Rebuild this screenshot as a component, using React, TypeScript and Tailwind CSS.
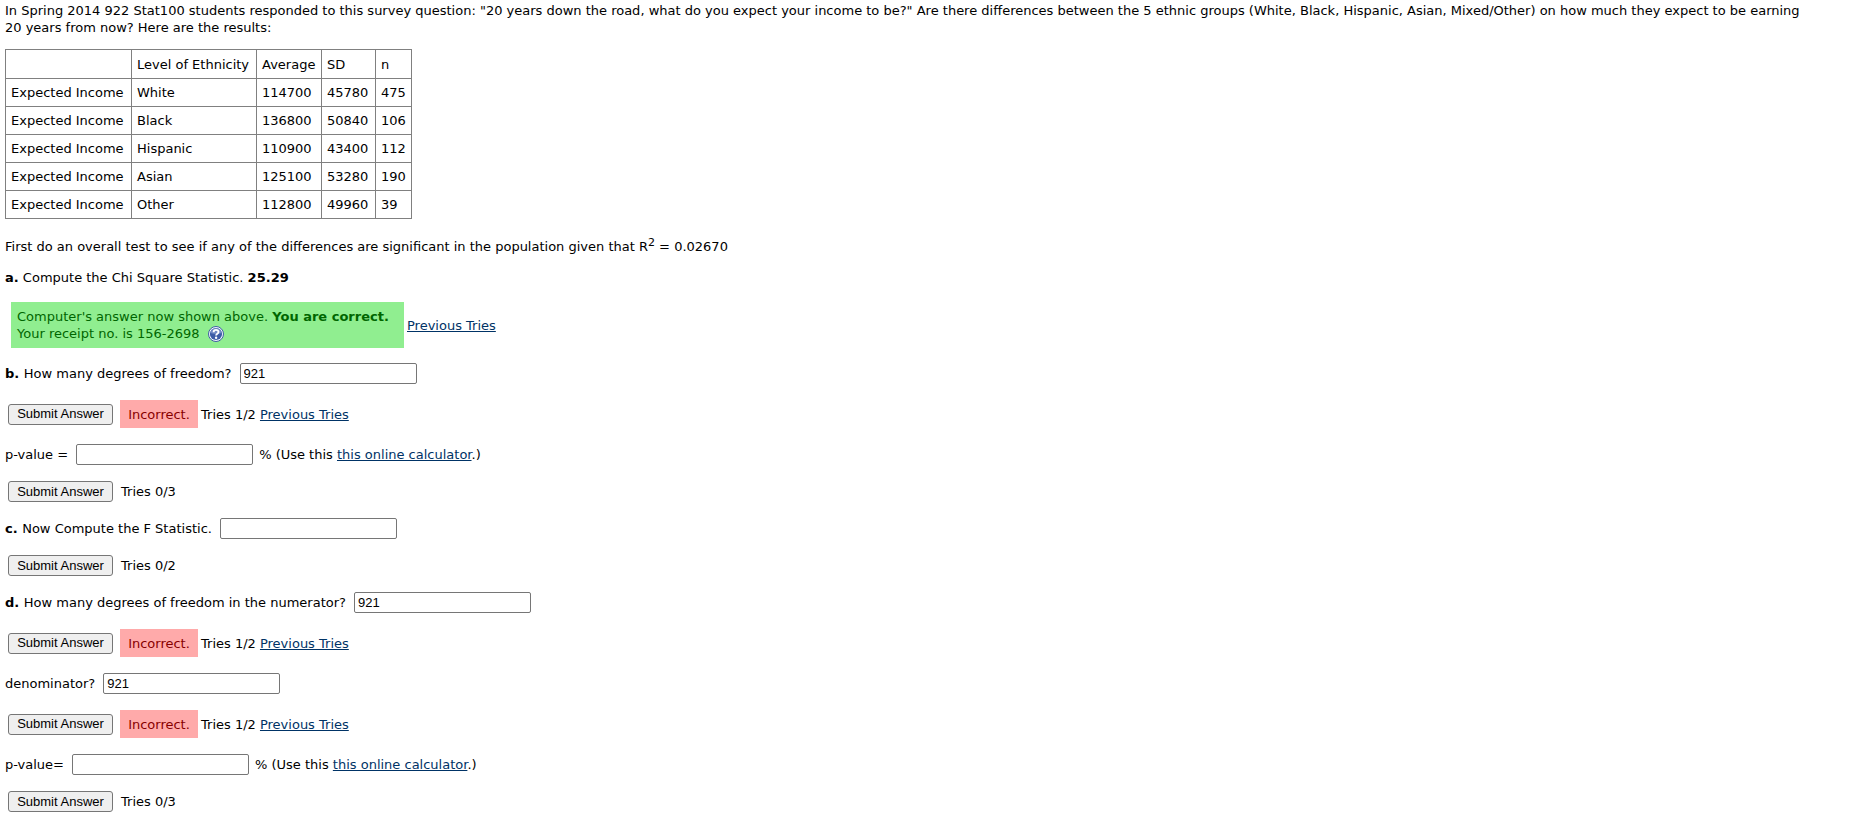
import { ReactNode, useState } from "react";

const results = [
  { level: "White", average: "114700", sd: "45780", n: "475" },
  { level: "Black", average: "136800", sd: "50840", n: "106" },
  { level: "Hispanic", average: "110900", sd: "43400", n: "112" },
  { level: "Asian", average: "125100", sd: "53280", n: "190" },
  { level: "Other", average: "112800", sd: "49960", n: "39" },
];

function TextLink({ children }: { children: ReactNode }) {
  return (
    <a href="#" className="text-[#003366] underline">
      {children}
    </a>
  );
}

function Question({
  id,
  part,
  label,
  initial = "",
  children,
}: {
  id: string;
  part?: string;
  label: string;
  initial?: string;
  children?: ReactNode;
}) {
  const [value, setValue] = useState(initial);

  return (
    <div className="flex items-center gap-1">
      <label htmlFor={id} className="pr-1">
        {part && <b>{part}. </b>}
        {label}
      </label>
      <input
        id={id}
        type="text"
        value={value}
        onChange={(event) => setValue(event.target.value)}
        className="h-[21px] w-[177px] rounded-xs border border-[#767676] bg-white px-[3px] font-['Liberation_Sans',Arial,sans-serif] text-[13px] leading-4"
      />
      {children && <span className="pl-[2px]">{children}</span>}
    </div>
  );
}

function Submission({ tries, incorrect = false }: { tries: string; incorrect?: boolean }) {
  return (
    <div className="flex items-center pl-[3px]">
      <button
        type="submit"
        className="h-[21px] w-[105px] rounded-[3px] border border-[#767676] bg-[#efefef] font-['Liberation_Sans',Arial,sans-serif] text-[13px] leading-4 whitespace-nowrap"
      >
        Submit Answer
      </button>
      {incorrect ? (
        <>
          <span className="mr-[3px] ml-[7px] flex h-7 w-[78px] items-center justify-center bg-[#ffaaaa] text-[#880000]">
            Incorrect.
          </span>
          <span>
            Tries {tries} <TextLink>Previous Tries</TextLink>
          </span>
        </>
      ) : (
        <span className="ml-2">Tries {tries}</span>
      )}
    </div>
  );
}

function HelpIcon() {
  return (
    <svg viewBox="0 0 16 16" className="h-4 w-4" aria-hidden="true">
      <circle cx="8" cy="8" r="7.5" fill="#f4f7ff" stroke="#3f5da3" />
      <circle cx="8" cy="8" r="6.1" fill="#3c5ca6" />
      <path d="M2.4 7a5.7 5.7 0 0 1 11.2 0Q8 9 2.4 7z" fill="#7089c4" />
      <path
        d="M5.6 6.2C5.7 3 10.6 3.2 10.5 6c0 1.8-2.4 1.7-2.4 3.5"
        fill="none"
        stroke="#fff"
        strokeWidth="1.9"
      />
      <circle cx="8.1" cy="11.8" r="1.2" fill="#fff" />
    </svg>
  );
}

export default function App() {
  return (
    <main className="bg-white px-[5px] pt-[2px] pb-2 font-['DejaVu_Sans',Verdana,sans-serif] text-[13px] leading-[17px] text-black">
      <p className="pr-12">
        In Spring 2014 922 Stat100 students responded to this survey question: "20 years down the road, what do you
        expect your income to be?" Are there differences between the 5 ethnic groups (White, Black, Hispanic, Asian,
        Mixed/Other) on how much they expect to be earning 20 years from now? Here are the results:
      </p>

      <table className="mt-[13px] border-collapse text-left [&_td]:border [&_td]:border-[#808080] [&_td]:px-[5px] [&_th]:border [&_th]:border-[#808080] [&_th]:px-[5px] [&_th]:font-normal">
        <thead>
          <tr className="h-[29px]">
            <td className="w-[126px]"></td>
            <th className="w-[125px]">Level of Ethnicity</th>
            <th className="w-[65px]">Average</th>
            <th className="w-[54px]">SD</th>
            <th className="w-[36px]">n</th>
          </tr>
        </thead>
        <tbody>
          {results.map((row) => (
            <tr key={row.level} className="h-[28px]">
              <td>Expected Income</td>
              <td>{row.level}</td>
              <td>{row.average}</td>
              <td>{row.sd}</td>
              <td>{row.n}</td>
            </tr>
          ))}
        </tbody>
      </table>

      <p className="mt-[19px]">
        First do an overall test to see if any of the differences are significant in the population given that R
        <sup className="text-[11px]">2</sup> = 0.02670
      </p>

      <p className="mt-[14px]">
        <b>a.</b> Compute the Chi Square Statistic. <b>25.29</b>
      </p>

      <div className="mt-4 flex items-center gap-[3px] pl-[6px]">
        <div className="min-w-[393px] bg-[#90ee90] px-[6px] py-[6px] text-[#006600]">
          <p>
            Computer's answer now shown above. <b>You are correct.</b>
          </p>
          <p className="flex items-center gap-2">
            Your receipt no. is 156-2698
            <a href="#" aria-label="Help">
              <HelpIcon />
            </a>
          </p>
        </div>
        <TextLink>Previous Tries</TextLink>
      </div>

      <form className="mt-[15px] flex flex-col gap-4" onSubmit={(event) => event.preventDefault()}>
        <Question id="chi-df" part="b" label="How many degrees of freedom?" initial="921" />
        <Submission tries="1/2" incorrect />
        <Question id="chi-p" label="p-value =">
          % (Use this <TextLink>this online calculator</TextLink>.)
        </Question>
        <Submission tries="0/3" />
        <Question id="f-stat" part="c" label="Now Compute the F Statistic." />
        <Submission tries="0/2" />
        <Question id="f-num" part="d" label="How many degrees of freedom in the numerator?" initial="921" />
        <Submission tries="1/2" incorrect />
        <Question id="f-den" label="denominator?" initial="921" />
        <Submission tries="1/2" incorrect />
        <Question id="f-p" label="p-value=">
          % (Use this <TextLink>this online calculator</TextLink>.)
        </Question>
        <Submission tries="0/3" />
      </form>
    </main>
  );
}
